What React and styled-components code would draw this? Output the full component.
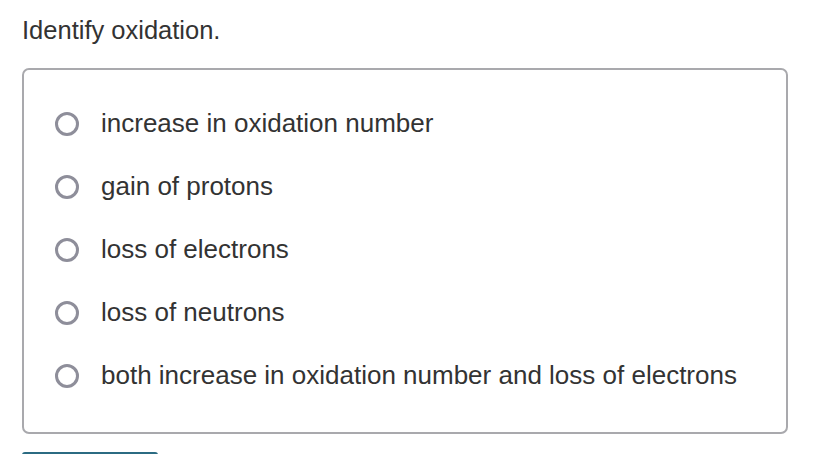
import styled, { createGlobalStyle } from "styled-components";

const GlobalStyle = createGlobalStyle`
  body {
    margin: 0;
    background: #fff;
    font-family: "Liberation Sans", Arial, Helvetica, sans-serif;
    color: #333;
  }
`;

const Page = styled.div`
  padding: 14px 22px 0 22px;
  width: 766px;
`;

const Prompt = styled.p`
  margin: 0 0 21px 0;
  font-size: 25.5px;
  line-height: 33px;
`;

const Choices = styled.fieldset`
  margin: 0;
  padding: 22px 0 25px 0;
  border: 2px solid #a9a9ad;
  border-radius: 7px;
  display: flex;
  flex-direction: column;
`;

const Choice = styled.label`
  display: flex;
  align-items: center;
  height: 63px;
  padding-left: 31px;
  font-size: 26px;
  cursor: pointer;
`;

const Radio = styled.input.attrs({ type: "radio" })`
  appearance: none;
  margin: 0 22px 0 0;
  width: 24px;
  height: 24px;
  border: 3px solid #8e8e9a;
  border-radius: 50%;
  box-sizing: border-box;
  flex-shrink: 0;
`;

// only the top edge of the submit button shows above the fold
const Submit = styled.button`
  display: block;
  margin-top: 18px;
  width: 136px;
  height: 44px;
  border: 2px solid #2b6b82;
  border-radius: 3px;
  background: #fff;
`;

const options = [
  "increase in oxidation number",
  "gain of protons",
  "loss of electrons",
  "loss of neutrons",
  "both increase in oxidation number and loss of electrons",
];

export default function App() {
  return (
    <>
      <GlobalStyle />
      <Page>
        <Prompt>Identify oxidation.</Prompt>
        <Choices>
          {options.map((text) => (
            <Choice key={text}>
              <Radio name="oxidation" />
              {text}
            </Choice>
          ))}
        </Choices>
        <Submit aria-label="Submit" />
      </Page>
    </>
  );
}
